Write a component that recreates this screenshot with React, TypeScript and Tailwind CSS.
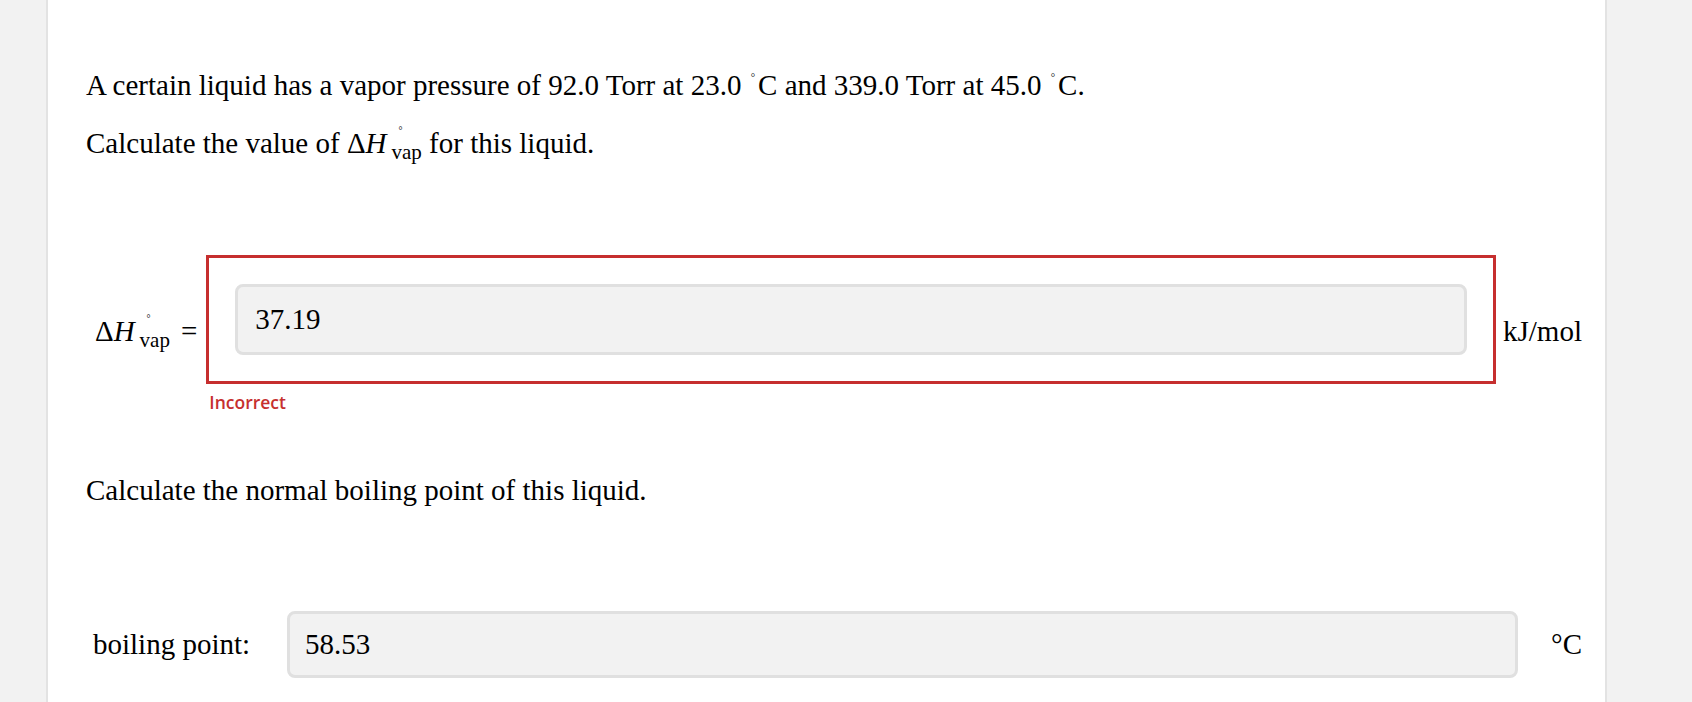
import React from 'react';

function DeltaHvap() {
  return (
    <span className="whitespace-nowrap">
      Δ<span className="italic">H</span>
      <span className="relative top-[6px] ml-[5px] text-[21px]">
        <span className="absolute left-[7px] top-[-14px] text-[10px] leading-none">°</span>
        vap
      </span>
    </span>
  );
}

function Deg() {
  return <span className="relative top-[-14px] ml-[2px] mr-[3px] text-[11px] leading-none">°</span>;
}

export default function App() {
  return (
    <div className="h-[702px] overflow-hidden bg-[#f2f2f2] font-['Liberation_Serif',serif] text-[29px] leading-[33px] text-black">
      <div className="ml-[46px] h-full w-[1561px] border-x-2 border-[#e3e3e3] bg-white pl-[38px] pr-[23px] pt-[69px]">
        <p>
          A certain liquid has a vapor pressure of 92.0 Torr at 23.0 <Deg />C and 339.0 Torr at 45.0 <Deg />C.
        </p>
        <p className="mt-[25px]">
          Calculate the value of <DeltaHvap /> for this liquid.
        </p>

        <div className="mt-[92px] flex items-start pl-[9px]">
          <div className="mt-[60px] flex items-baseline">
            <DeltaHvap />
            <span className="ml-[11px]">=</span>
          </div>
          <div className="ml-[9px] flex flex-1 flex-col">
            <div className="border-[3px] border-[#c62f2f] p-[26px]">
              <input
                readOnly
                value="37.19"
                className="h-[71px] w-full rounded-[8px] border-[3px] border-[#e0e0e0] bg-[#f2f2f2] pl-[17px] outline-none"
              />
            </div>
            <div className="mt-[7px] pl-[3px] font-['Open_Sans',sans-serif] text-[17.5px] font-semibold leading-[23px] text-[#c62f2f]">
              Incorrect
            </div>
          </div>
          <div className="ml-[7px] mt-[60px]">kJ/mol</div>
        </div>

        <p className="mt-[60px]">Calculate the normal boiling point of this liquid.</p>

        <div className="mt-[104px] flex items-center pl-[7px]">
          <span>boiling point:</span>
          <input
            readOnly
            value="58.53"
            className="ml-[37px] h-[67px] flex-1 rounded-[8px] border-[3px] border-[#e0e0e0] bg-[#f2f2f2] pl-[15px] outline-none"
          />
          <span className="ml-[33px]">°C</span>
        </div>
      </div>
    </div>
  );
}
